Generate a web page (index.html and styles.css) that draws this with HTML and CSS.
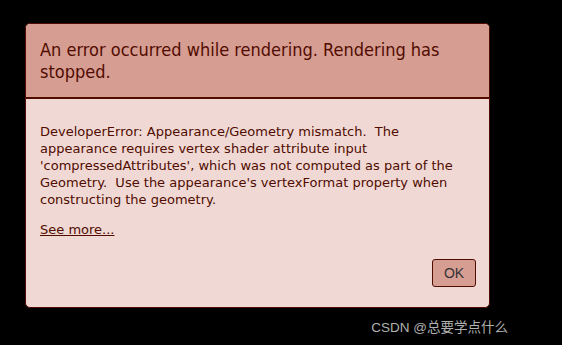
FILE: index.html
```html
<!DOCTYPE html>
<html>
<head>
<meta charset="utf-8">
<link rel="stylesheet" href="styles.css">
</head>
<body>
<div class="page">
  <div class="panel">
    <div class="header">An error occurred while rendering. Rendering has stopped.</div>
    <div class="scroll">
      <div class="message">DeveloperError: Appearance/Geometry mismatch.&nbsp; The<br>appearance requires vertex shader attribute input<br>'compressedAttributes', which was not computed as part of the<br>Geometry.&nbsp; Use the appearance's vertexFormat property when<br>constructing the geometry.</div>
      <div class="more">See more...</div>
    </div>
    <div class="buttons"><button class="ok">OK</button></div>
  </div>
  <div class="watermark">CSDN @总要学点什么</div>
</div>
</body>
</html>
```
FILE: styles.css
```css
html, body {
  margin: 0;
  padding: 0;
  background: #000;
}
.page {
  width: 562px;
  height: 345px;
  padding: 23px 0 0 25px;
  box-sizing: border-box;
  display: flex;
  flex-direction: column;
}
.panel {
  width: 465px;
  box-sizing: border-box;
  border: 1px solid #510c00;
  border-radius: 5px;
  background: #f0d9d5;
  color: #510c00;
  font-family: "DejaVu Sans Condensed", "DejaVu Sans", Verdana, sans-serif;
  overflow: hidden;
}
.header {
  background: #d69d93;
  border-bottom: 2px solid #510c00;
  padding: 15px 15px 14px 14px;
  font-size: 18px;
  line-height: 22px;
}
.scroll {
  padding: 24px 15px 0 14px;
  font-family: "DejaVu Sans", Verdana, sans-serif;
  font-size: 13px;
  line-height: 17px;
}
.more {
  margin-top: 13px;
  text-decoration: underline;
}
.buttons {
  display: flex;
  justify-content: flex-end;
  padding: 0 13px 20px 15px;
  margin-top: 21px;
}
.ok {
  width: 44px;
  height: 28px;
  border: 1px solid #510c00;
  border-radius: 3px;
  background: #d69d93;
  color: #333;
  font-family: "Liberation Sans", Arial, sans-serif;
  font-size: 14px;
  padding: 0;
}
.watermark {
  align-self: flex-end;
  margin: 8px 54px 0 0;
  color: #b0b0b0;
  font-family: "Liberation Sans", "Noto Sans CJK SC", sans-serif;
  font-size: 13.5px;
}
```
